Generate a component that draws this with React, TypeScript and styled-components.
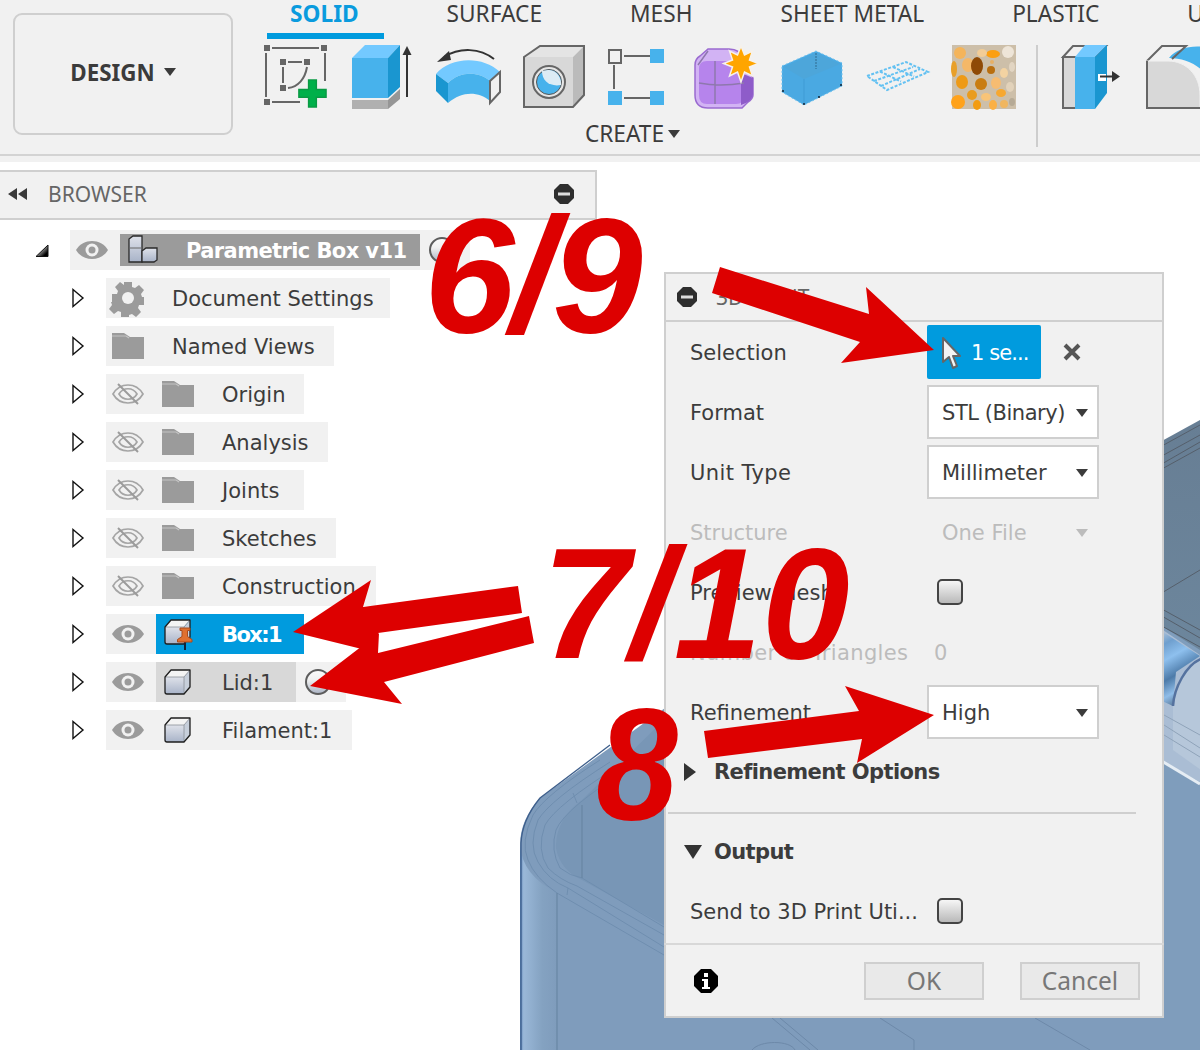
import React from 'react';
import styled, { createGlobalStyle } from 'styled-components';

const Global = createGlobalStyle`
  html, body { margin: 0; padding: 0; background: #fff; }
  * { box-sizing: border-box; }
`;

const UI = `"DejaVu Sans", "Liberation Sans", sans-serif`;
const BAR = `"Noto Sans", "Open Sans", sans-serif`;

const Root = styled.div`
  position: relative; width: 1200px; height: 1050px; overflow: hidden; background: #fff;
  font-family: ${UI}; color: #3c3c3c;
`;
const Canvas = styled.svg`position: absolute; left: 0; top: 0; z-index: 0;`;
const Overlay = styled.svg`position: absolute; left: 0; top: 0; z-index: 3; pointer-events: none;`;
const Big = styled.div<{ $x: number; $y: number; $s: number; $sp?: number; $sx?: number }>`
  position: absolute; left: ${p => p.$x}px; top: ${p => p.$y}px; z-index: 4;
  font: italic 700 ${p => p.$s}px/1 "Liberation Sans", Arial, sans-serif;
  letter-spacing: ${p => p.$sp ?? 0}px; color: #dd0000; white-space: nowrap;
  transform: scaleX(${p => p.$sx ?? 1}); transform-origin: left top;
`;

/* toolbar */
const Toolbar = styled.header`position: relative; z-index: 1; height: 162px; background: #f1f1f1; font-family: ${BAR};`;
const ToolbarMain = styled.div`display: flex; height: 156px; border-bottom: 2px solid #d3d3d3;`;
const DesignButton = styled.div`
  flex: none; width: 220px; height: 122px; margin: 13px 0 0 13px; border: 2px solid #cfcfcf; border-radius: 9px; padding-bottom: 4px;
  display: flex; align-items: center; justify-content: center; gap: 9px; font-weight: 700; font-size: 22.4px; color: #3b3b3b;
`;
const ToolColumn = styled.div`flex: none; margin-left: 31px; width: 1000px; margin-top: -1px;`;
const Tabs = styled.nav`display: flex; gap: 40px; margin-left: 3px; height: 40px;`;
const Tab = styled.div<{ $on?: boolean }>`
  flex: none; height: 40px; padding: 0 25px 0 23px; line-height: 30px; font-size: 22.7px; white-space: nowrap;
  color: ${p => (p.$on ? '#0a9bde' : '#3c3c3c')}; font-weight: ${p => (p.$on ? 700 : 400)};
  border-bottom: 6px solid ${p => (p.$on ? '#009bde' : 'transparent')};
`;
const Ribbon = styled.div`display: flex; margin-top: 6px;`;
const ToolGroup = styled.div`display: flex; flex-direction: column; align-items: center; flex: none;`;
const IconRow = styled.div`display: flex; gap: 22px;`;
const GroupLabel = styled.div`
  display: flex; align-items: center; gap: 4px; margin-top: 9px; padding-right: 15px; font-size: 22.7px; line-height: 31px; color: #3c3c3c;
`;
const Separator = styled.div`flex: none; width: 2px; height: 102px; margin: 0 22px 0 20px; background: #cdcdcd;`;
const Caret = styled.span<{ $c?: string }>`
  display: inline-block; flex: none; width: 0; height: 0;
  border-left: 6px solid transparent; border-right: 6px solid transparent;
  border-top: 8px solid ${p => p.$c ?? '#3b3b3b'};
`;

/* browser */
const BrowserPanel = styled.section`position: relative; z-index: 1; margin-top: 8px; width: 597px;`;
const PanelHead = styled.div`
  height: 50px; display: flex; align-items: center; padding: 0 21px 2px 8px; background: #f1f1f1;
  border: 2px solid #cfcfcf; border-left: 0; font-family: ${BAR}; font-size: 21px; color: #666;
`;
const PanelTitle = styled.span`flex: 1; margin-left: 20px;`;
const Tree = styled.div`display: flex; flex-direction: column; gap: 8px; margin-top: 10px;`;
const Row = styled.div<{ $root?: boolean }>`
  display: flex; align-items: center; height: 40px; padding-left: ${p => (p.$root ? 35 : 72)}px; gap: 22px;
`;
const ToggleBox = styled.span<{ $root?: boolean }>`flex: none; width: ${p => (p.$root ? 13 : 12)}px; display: flex;`;
const Item = styled.div<{ $w: number }>`
  flex: none; display: flex; align-items: center; height: 40px; width: ${p => p.$w}px; background: #f1f1f1;
`;
const EyeSlot = styled.span`flex: none; display: flex; margin-left: 6px; margin-right: 12px;`;
const Pill = styled.div<{ $tone?: 'sel' | 'hover' | 'root'; $w?: number }>`
  flex: none; display: flex; align-items: center; padding-left: 6px; white-space: nowrap;
  width: ${p => (p.$w ? `${p.$w}px` : 'auto')};
  height: ${p => (p.$tone === 'root' ? 32 : 40)}px;
  font-size: 21px;
  letter-spacing: ${p => (p.$tone === 'sel' ? -1.6 : p.$tone === 'root' ? -.6 : 0)}px;
  background: ${p => (p.$tone === 'sel' ? '#009bde' : p.$tone === 'hover' ? '#d8d8d8' : p.$tone === 'root' ? '#9b9b9b' : 'transparent')};
  color: ${p => (p.$tone === 'sel' || p.$tone === 'root' ? '#fff' : '#3c3c3c')};
  font-weight: ${p => (p.$tone === 'sel' || p.$tone === 'root' ? 700 : 400)};
`;
const PillIcon = styled.span`flex: none; display: flex; width: 32px; margin-right: 28px;`;
const PillText = styled.span`padding-top: 2px;`;
const Radio = styled.span`
  flex: none; width: 26px; height: 26px; margin-left: 9px; border-radius: 50%; border: 2px solid #5c5c5c;
  background: linear-gradient(#fafafa, #f0f0f0 40%, #aeb6c6);
`;

/* dialog */
const Dialog = styled.aside`
  position: absolute; left: 664px; top: 272px; width: 500px; height: 746px; z-index: 2; background: #f1f1f1;
  display: flex; flex-direction: column; border: 2px solid #cfcfcf; border-top: 0; font-size: 21px;
`;
const DialogHead = styled.div`
  height: 50px; margin: 0 -2px; display: flex; align-items: center; padding: 0 0 0 11px; gap: 19px;
  border: 2px solid #cfcfcf; font-family: ${BAR}; font-size: 21px; color: #666;
`;
const DialogBody = styled.div`flex: 1; padding-left: 24px;`;
const FormRow = styled.div<{ $off?: boolean }>`
  display: flex; align-items: center; height: 60px; color: ${p => (p.$off ? '#bcbcbc' : '#3c3c3c')};
`;
const Label = styled.span<{ $w?: number; $sp?: number }>`
  flex: none; width: ${p => p.$w ?? 237}px; white-space: nowrap; padding-top: 2px; letter-spacing: ${p => p.$sp ?? 0}px;
`;
const SelectBtn = styled.div`
  width: 114px; height: 54px; background: #009bde; border-radius: 2px; color: #fff; display: flex; align-items: center; gap: 10px; padding: 2px 0 0 14px; letter-spacing: -.9px;
`;
const ClearX = styled.span`display: flex; margin-left: 22px;`;
const Select = styled.div<{ $flat?: boolean; $sp?: number }>`
  width: 172px; height: 54px; display: flex; align-items: center; justify-content: space-between; padding: 2px 9px 0 13px;
  background: ${p => (p.$flat ? 'transparent' : '#fff')}; border: 2px solid ${p => (p.$flat ? 'transparent' : '#cfcfcf')}; white-space: nowrap;
  letter-spacing: ${p => p.$sp ?? 0}px;
`;
const CheckSlot = styled.span`flex: none; display: flex; margin-left: 10px;`;
const Check = styled.span`
  display: block; width: 26px; height: 26px; border: 2px solid #444; border-radius: 5px; background: linear-gradient(#f6f6f6, #b9b9b9); flex: none;
`;
const Section = styled.div<{ $h?: number }>`display: flex; align-items: center; height: ${p => p.$h ?? 60}px; font-weight: 700; font-size: 21px; letter-spacing: -.6px; margin-left: -6px;`;
const SectionGlyph = styled.span`display: flex; width: 30px;`;
const SectionText = styled.span`padding-top: 0;`;
const Rule = styled.div`height: 2px; margin: 10px 26px 9px -22px; background: #cfcfcf;`;
const NumVal = styled.span`margin-left: 7px; padding-top: 2px; color: #bcbcbc;`;
const DialogFoot = styled.div`
  height: 73px; margin: 0 -2px; border-top: 2px solid #d8d8d8; display: flex; align-items: center; padding: 0 24px 0 30px;
`;
const Spacer = styled.span`flex: 1;`;
const FootBtn = styled.div`
  width: 120px; height: 38px; margin-left: 36px; border: 2px solid #cfcfcf; background: #e9e9e9; color: #777; display: flex; align-items: center; justify-content: center; font-size: 24.5px; font-family: ${BAR};
`;

/* drawings */
const Sv = ({ w = 64, h = 64, children }: { w?: number; h?: number; children: React.ReactNode }) => (
  <svg width={w} height={h} viewBox={`0 0 ${w} ${h}`} style={{ display: 'block', overflow: 'visible' }}>{children}</svg>
);

const IconSketch = () => (
  <Sv>
    <g fill="#666">
      <rect x="0" y="0" width="6" height="6" /><rect x="57" y="0" width="6" height="6" /><rect x="0" y="54" width="6" height="6" />
      <rect x="16" y="14" width="6" height="6" /><rect x="40" y="14" width="6" height="6" /><rect x="16" y="40" width="6" height="6" />
    </g>
    <g stroke="#666" strokeWidth="2" fill="none">
      <path d="M8 3H55M2 8V52M8 57H36M61 8V36M24 17H38M19 22V38" />
      <path d="M43 22C41 34 34 42 24 43" />
    </g>
    <path d="M47 37h8v10h10v8H55v10h-8V55H37v-8h10z" transform="translate(-1 -1) scale(.97)" fill="#00b04a" stroke="#0a9a44" strokeWidth="1.5" />
  </Sv>
);
const IconExtrude = () => (
  <Sv>
    <path d="M2 13L15 0H50L38 13z" fill="#73c9ff" />
    <rect x="2" y="13" width="36" height="40" fill="#47b2ec" />
    <path d="M38 13L50 0V42L38 53z" fill="#1a96d0" />
    <path d="M2 55H38V64H2z" fill="#b0b0b0" />
    <path d="M38 55L50 44V54L38 64z" fill="#969696" />
    <path d="M57 52V6" stroke="#333" strokeWidth="2" />
    <path d="M52.500 10L57 1l4.500 9z" fill="#333" />
  </Sv>
);
const IconRevolve = () => (
  <Sv>
    <path d="M0 29C14 12 46 10 64 27L54 36C42 26 24 26 12 38z" fill="#73c9ff" />
    <path d="M12 38C24 26 42 26 54 36V56C42 46 26 46 12 58z" fill="#47b2ec" />
    <path d="M0 29L12 38V58L0 46z" fill="#1a96d0" />
    <path d="M54 36L64 27V47L54 58z" fill="#f1f1f1" stroke="#666" strokeWidth="2" />
    <path d="M58 14C44 3 24 2 8 12" fill="none" stroke="#333" strokeWidth="2" />
    <path d="M1 17L13 6l2 9z" fill="#333" />
  </Sv>
);
const IconHole = () => (
  <Sv>
    <path d="M2 12L18 1H62L51 12z" fill="#e4e4e4" />
    <rect x="2" y="12" width="50" height="50" fill="#d8d8d8" />
    <path d="M51 12L62 1V50L51 62z" fill="#bbb" />
    <path d="M2 12L18 1H62V50L51 62H2z" fill="none" stroke="#666" strokeWidth="2" />
    <circle cx="27" cy="37" r="16" fill="#e6e6e6" stroke="#666" strokeWidth="2" />
    <circle cx="27" cy="37" r="12.500" fill="#47b2ec" stroke="#555" strokeWidth="1" />
    <path d="M20 26C20 36 28 42 39 40C40 33 34 24 26 25z" fill="#dcecf5" />
  </Sv>
);
const IconPatch = () => (
  <Sv>
    <path d="M16 11H42M6 20V44M16 53H42" stroke="#666" strokeWidth="2" />
    <rect x="1" y="5" width="12" height="13" fill="#f1f1f1" stroke="#666" strokeWidth="2" />
    <rect x="42" y="4" width="14" height="14" fill="#47b2ec" />
    <rect x="0" y="46" width="14" height="14" fill="#47b2ec" />
    <rect x="42" y="46" width="14" height="14" fill="#47b2ec" />
  </Sv>
);
const IconForm = () => (
  <Sv>
    <path d="M1 20Q1 14 6 11L14 4H35Q46 4 50 14L59 33V50Q59 54 54 57L48 63H14Q1 63 1 50z" fill="#d2b3f4" stroke="#9a6bd0" strokeWidth="1.500" />
    <path d="M5 24Q5 16 13 16H42Q50 16 50 24V50Q50 59 42 59H13Q5 59 5 50z" fill="#b684ec" />
    <path d="M47 28L59 33V49Q59 54 52 58L47 60z" fill="#8e5cc9" />
    <path d="M5 38Q26 42 50 38M21 16V59M4 20L14 6" fill="none" stroke="#8e78ad" strokeWidth="1.500" />
    <path d="M48 1l3.500 9 8-4-3 9 9 3.500-9 3.500 3 9-8-4-3.500 10-3.500-10-8 4 3-9-9-3.500 9-3.500-3-9 8 4z" transform="translate(-1 0)" fill="#ffa500" stroke="#f7f2ea" strokeWidth="1.500" />
  </Sv>
);
const IconMeshBox = () => (
  <Sv>
    <path d="M2 21L36 6L62 18V41L24 60L2 47z" fill="#4aa9e2" stroke="#6cc1f0" strokeWidth="1" strokeDasharray="2 2" />
    <path d="M4 22L36 8L60 19L24 34z" fill="#4da6da" />
    <path d="M36 8V24" stroke="#3a7fa8" strokeWidth="1.500" strokeDasharray="2 1" />
    <path d="M24 34V59" stroke="#3f9bd5" strokeWidth="1" />
    <path d="M23 59h2M38 52h2M60 40h2M2 46h2" stroke="#123" strokeWidth="1.500" />
  </Sv>
);
const IconThin = () => (
  <Sv>
    <g fill="none" stroke="#63c1f2" strokeWidth="2" strokeDasharray="3 1.500">
      <path d="M1 31L40 17L62 27L21 45z" />
      <path d="M14 26.500L35 36.500M27 22L48 31.500" />
      <path d="M8 36L47 22M15 41L54 24" />
    </g>
  </Sv>
);
const CELLS: [number, number, number, number, string][] = [
  [8, 8, 6, 6, '#f4b45a'], [16, 20, 6, 7, '#f5b868'], [2, 24, 3, 8, '#e8a02a'], [41, 9, 7, 4, '#fb9f12'], [56, 7, 6, 6, '#eee5d8'],
  [25, 21, 6, 9, '#8f4a06'], [39, 25, 4, 4, '#b96f10'], [10, 37, 6, 7, '#ee9a16'], [29, 39, 6, 6, '#c97d12'], [44, 38, 5, 6, '#f6bc72'],
  [52, 28, 4, 5, '#f3d3a2'], [60, 22, 3, 5, '#e2d5c2'], [20, 50, 5, 5, '#e99c1e'], [49, 48, 5, 4, '#f7a830'], [34, 52, 5, 4, '#f8c478'],
  [6, 57, 7, 7, '#ffa21a'], [25, 60, 4, 5, '#f39c12'], [30, 8, 5, 4, '#f2cc96'], [58, 42, 4, 5, '#e2d2ba'], [41, 60, 4, 5, '#fbb044'],
  [52, 59, 4, 4, '#f0b65f'], [60, 57, 3, 4, '#b6aa96'], [40, 17, 2, 2, '#e6b066']
];
const IconTexture = () => (
  <Sv>
    <rect width="64" height="64" fill="#cdbfa9" />
    {CELLS.map(([x, y, a, b, c], i) => <ellipse key={i} cx={x} cy={y} rx={a} ry={b} fill={c} />)}
  </Sv>
);
const IconPress = () => (
  <Sv>
    <path d="M3 12L13 1H46L35 12z" fill="#f1f1f1" stroke="#666" strokeWidth="2" />
    <path d="M3 12H16V63H3z" fill="#d8d8d8" stroke="#666" strokeWidth="2" />
    <path d="M15 12L25 0H47L35 12z" fill="#73c9ff" />
    <rect x="15" y="12" width="20" height="52" fill="#47b2ec" />
    <path d="M35 12L47 0V48L35 64z" fill="#1a96d0" />
    <rect x="38" y="29" width="8" height="7" fill="#fff" />
    <path d="M40 31.500H54" stroke="#333" strokeWidth="2" />
    <path d="M52 26l8 5.500-8 5.500z" fill="#333" />
  </Sv>
);
const IconFillet = () => (
  <Sv>
    <path d="M26 14C36 1 60 -1 78 8V60L62 30C55 20 40 14 26 14z" fill="#47b2ec" transform="translate(-3 -1)" />
    <path d="M1 16L16 1H40L26 14" fill="none" stroke="#666" strokeWidth="2" />
    <path d="M1 16H22C40 16 54 30 54 50V63H1z" fill="#d8d8d8" stroke="#f1f1f1" strokeWidth="1" />
    <path d="M1 16V63H54" fill="none" stroke="#666" strokeWidth="2" />
    <path d="M54 50L64 38V63H54z" fill="#bbb" />
  </Sv>
);

const Toggle = () => (
  <Sv w={12} h={20}><path d="M1 1.500L11 10L1 18.500z" fill="#fff" stroke="#111" strokeWidth="1.400" /></Sv>
);
const RootToggle = () => (
  <Sv w={13} h={13}>
    <defs><linearGradient id="rt" x1="0" y1="0" x2="1" y2="1"><stop offset="0.35" stopColor="#bbb" /><stop offset="0.8" stopColor="#000" /></linearGradient></defs>
    <path d="M1 12.500H13V1z" fill="url(#rt)" stroke="#111" strokeWidth="1" />
  </Sv>
);
const Eye = () => (
  <Sv w={32} h={20}>
    <path d="M0 10C7 -2 25 -2 32 10C25 22 7 22 0 10z" fill="#9b9b9b" />
    <circle cx="16" cy="10" r="6.500" fill="#f1f1f1" /><circle cx="16" cy="10" r="3.500" fill="#9b9b9b" />
  </Sv>
);
const EyeOff = () => (
  <Sv w={32} h={22}>
    <g fill="none" stroke="#a5a5a5" strokeWidth="1.700">
      <path d="M1 11C8 -1 24 -1 31 11C24 23 8 23 1 11z" />
      <path d="M7 11C11 4 21 4 25 11C21 18 11 18 7 11z" />
      <path d="M6 1L26 21" strokeWidth="2" stroke="#9b9b9b" />
    </g>
  </Sv>
);
const Folder = () => (
  <Sv w={32} h={26}>
    <path d="M0 0H12L18 4H32V26H0z" fill="#9b9b9b" />
    <path d="M0 3H14L17 5" stroke="#c4c4c4" strokeWidth="1.200" fill="none" />
  </Sv>
);
const Gear = () => (
  <Sv w={32} h={32}>
    <path fill="#9b9b9b" d="M12 0h8v5l3 1 4-3 5 5-3 4 1 3h2v8h-5l-1 3 3 4-5 5-4-3-3 1v2h-8v-5l-3-1-4 3-5-5 3-4-1-3H0v-8h5l1-3-3-4 5-5 4 3z" />
    <circle cx="16" cy="16" r="6" fill="#f1f1f1" />
  </Sv>
);
const CubeGrad = () => (
  <defs><linearGradient id="cg" x1="0" y1="0" x2="0" y2="1"><stop offset="0" stopColor="#dfe2ea" /><stop offset="1" stopColor="#a8b3c8" /></linearGradient></defs>
);
const CubeFaces = () => (
  <>
    <path d="M3 8L9 1H28L22 8z" fill="#f4f4f4" />
    <path d="M3 8H22V25H3z" fill="url(#cg)" />
    <path d="M22 8L28 1V18L22 25z" fill="#c7cfdb" />
    <path d="M3 8H22V25M22 8L28 1" fill="none" stroke="#8b8f98" strokeWidth=".8" />
    <path d="M3 8L9 1H28V18L22 25H5Q3 25 3 23z" fill="none" stroke="#1e1e1e" strokeWidth="1.300" strokeLinejoin="round" />
  </>
);
const Cube = () => (
  <Sv w={32} h={26}><CubeGrad /><CubeFaces /></Sv>
);
const PinCube = () => (
  <Sv w={32} h={30}>
    <CubeGrad /><CubeFaces />
    <path d="M23 31V22" stroke="#10253a" strokeWidth="2" />
    <path d="M18 9h10v2.500h-2.500v6l4.500 3v2.500H15.500v-2.500l4.500-3v-6H18z" fill="#e0702f" stroke="#a84a1c" strokeWidth="1" />
  </Sv>
);
const Assembly = () => (
  <Sv w={32} h={30}>
    <CubeGrad />
    <path d="M3 27V4L7 1H16V27z" fill="url(#cg)" stroke="#2a2a2a" strokeWidth="1.300" />
    <path d="M3 13H16" stroke="#666" strokeWidth="1" />
    <path d="M16 16L20 13H31V25L28 27H16z" fill="url(#cg)" stroke="#2a2a2a" strokeWidth="1.300" />
  </Sv>
);
const Minus = () => (
  <Sv w={20} h={20}>
    <path d="M6 0h8l6 6v8l-6 6H6l-6-6V6z" fill="#2e2e2e" /><rect x="4" y="8.500" width="12" height="3" fill="#ddd" />
  </Sv>
);
const Collapse = () => (
  <Sv w={20} h={14}><path d="M0 7L9 1V13zM10 7L19 1V13z" fill="#3a3a3a" /></Sv>
);
const Pointer = () => (
  <Sv w={20} h={32}>
    <path d="M2 1V25L8 20L12 31L16 29L12 19H19z" fill="#f4f4f4" stroke="#666" strokeWidth="2" strokeLinejoin="round" />
  </Sv>
);
const XMark = () => (
  <Sv w={18} h={18}><path d="M2 2L16 16M16 2L2 16" stroke="#555" strokeWidth="4" /></Sv>
);
const Info = () => (
  <Sv w={24} h={24}>
    <path d="M7 0h10l7 7v10l-7 7H7l-7-7V7z" fill="#000" />
    <rect x="10" y="4" width="4" height="4" fill="#fff" /><path d="M8 10h6v8h2v2H8v-2h2v-6H8z" fill="#fff" />
  </Sv>
);
const TriRight = () => <Sv w={12} h={18}><path d="M0 0L12 9L0 18z" fill="#333" /></Sv>;
const TriDown = () => <Sv w={18} h={14}><path d="M0 0H18L9 14z" fill="#333" /></Sv>;

type TreeItem = { name: string; w: number; eye?: 'on' | 'off'; icon: React.ReactNode; tone?: 'sel' | 'hover'; pw?: number; radio?: boolean };
const ITEMS: TreeItem[] = [
  { name: 'Document Settings', w: 284, icon: <Gear /> },
  { name: 'Named Views', w: 228, icon: <Folder /> },
  { name: 'Origin', w: 198, eye: 'off', icon: <Folder /> },
  { name: 'Analysis', w: 222, eye: 'off', icon: <Folder /> },
  { name: 'Joints', w: 198, eye: 'off', icon: <Folder /> },
  { name: 'Sketches', w: 230, eye: 'off', icon: <Folder /> },
  { name: 'Construction', w: 270, eye: 'off', icon: <Folder /> },
  { name: 'Box:1', w: 198, eye: 'on', icon: <PinCube />, tone: 'sel', pw: 148 },
  { name: 'Lid:1', w: 240, eye: 'on', icon: <Cube />, tone: 'hover', pw: 140, radio: true },
  { name: 'Filament:1', w: 246, eye: 'on', icon: <Cube /> }
];

export default function App() {
  return (
    <Root>
      <Global />
      <Canvas width={1200} height={1050} viewBox="0 0 1200 1050">
        <defs>
          <linearGradient id="cyl" x1="0" y1="0" x2="1" y2="0">
            <stop offset="0" stopColor="#5f86b8" /><stop offset=".1" stopColor="#9ab8d8" /><stop offset=".6" stopColor="#84a2c1" /><stop offset="1" stopColor="#7f9cbc" />
          </linearGradient>
          <linearGradient id="dark" x1="0" y1="0" x2="0" y2="1">
            <stop offset="0" stopColor="#677e94" /><stop offset="1" stopColor="#7694ab" />
          </linearGradient>
          <linearGradient id="pin" x1="0" y1="0" x2=".3" y2="1">
            <stop offset="0" stopColor="#b9c9db" /><stop offset=".2" stopColor="#6f9fce" /><stop offset=".4" stopColor="#8ec0ee" /><stop offset=".65" stopColor="#4d7ba9" /><stop offset=".85" stopColor="#90bde8" /><stop offset="1" stopColor="#5f7fa0" />
          </linearGradient>
        </defs>
        <path d="M520 1050V845Q520 820 540 798L690 690V1050z" fill="#7f9cbc" />
        <path d="M520 1050V845Q522 875 557 893V1050z" fill="url(#cyl)" />
        <path d="M582 800Q555 820 556 848Q560 870 582 880L664 925V720z" fill="#7896b6" />
        <g fill="none" stroke="#6d8cae" strokeWidth=".9">
          <path d="M600 760Q545 795 533 815Q520 842 528 860Q535 878 557 893L664 955" />
          <path d="M610 762Q550 800 538 820Q528 845 538 862Q548 880 568 888L664 947" />
          <path d="M620 765Q556 805 545 825Q536 850 548 868Q560 880 577 886L664 935" />
          <path d="M630 768Q565 808 556 830Q550 850 560 868Q570 876 582 878L664 927" />
          <path d="M568 888L567 895M573 793L577 803" />
        </g>
        <path d="M557 893V1050M582 805V878" stroke="#64829f" strokeWidth="1" fill="none" />
        <path d="M521 1050V843Q522 820 540 798L610 745" stroke="#3e5f8c" strokeWidth="1.300" fill="none" />
        <path d="M1160 442L1200 420V1050H1160z" fill="url(#dark)" />
        <path d="M1160 625L1200 650V1050H1160z" fill="#7f9dbc" />
        <path d="M1160 628L1200 655V782L1160 760z" fill="#aabdd4" />
        <path d="M1160 630L1200 656L1176 672L1173 706L1160 700z" fill="url(#pin)" />
        <path d="M1173 706C1173 690 1184 665 1201 660V770L1173 750z" fill="#b6c7da" />
        <path d="M1173 706C1174 688 1186 665 1201 659" fill="none" stroke="#55729f" strokeWidth="2.500" />
        <g fill="none" stroke="#555f6b" strokeWidth="1">
          <path d="M1160 447L1200 425M1160 457L1200 435M1160 465L1200 442M1160 470L1200 448M1160 594L1200 570" />
          <path d="M1160 608L1200 630M1160 615L1200 638M1160 625L1200 647" />
        </g>
        <g fill="none" stroke="#8fa3b9" strokeWidth="1">
          <path d="M1164 715L1200 735M1164 725L1200 748M1164 735L1200 757" />
        </g>
        <path d="M1160 760L1200 784" stroke="#e6edf4" strokeWidth="3" />
        <path d="M664 1010H1170V1050H664z" fill="#7f9cbc" />
        <g fill="none" stroke="#6d89a9" strokeWidth="1">
          <path d="M772 1018L810 1050M780 1018L818 1050M1035 1018L1090 1050M880 1018L914 1040V1050" />
          <path d="M752 1050C760 1040 790 1040 795 1050" />
        </g>
      </Canvas>

      <Toolbar>
        <ToolbarMain>
          <DesignButton>DESIGN <Caret /></DesignButton>
          <ToolColumn>
            <Tabs>
              <Tab $on>SOLID</Tab><Tab>SURFACE</Tab><Tab>MESH</Tab><Tab>SHEET METAL</Tab><Tab>PLASTIC</Tab><Tab>UTILITIES</Tab>
            </Tabs>
            <Ribbon>
              <ToolGroup>
                <IconRow>
                  <IconSketch /><IconExtrude /><IconRevolve /><IconHole /><IconPatch /><IconForm /><IconMeshBox /><IconThin /><IconTexture />
                </IconRow>
                <GroupLabel>CREATE <Caret /></GroupLabel>
              </ToolGroup>
              <Separator />
              <IconRow><IconPress /><IconFillet /></IconRow>
            </Ribbon>
          </ToolColumn>
        </ToolbarMain>
      </Toolbar>

      <BrowserPanel>
        <PanelHead>
          <Collapse /><PanelTitle>BROWSER</PanelTitle><Minus />
        </PanelHead>
        <Tree>
          <Row $root>
            <ToggleBox $root><RootToggle /></ToggleBox>
            <Item $w={400}>
              <EyeSlot><Eye /></EyeSlot>
              <Pill $tone="root" $w={300}>
                <PillIcon><Assembly /></PillIcon><PillText>Parametric Box v11</PillText>
              </Pill>
              <Radio />
            </Item>
          </Row>
          {ITEMS.map(it => (
            <Row key={it.name}>
              <ToggleBox><Toggle /></ToggleBox>
              <Item $w={it.w}>
                {it.eye && <EyeSlot>{it.eye === 'on' ? <Eye /> : <EyeOff />}</EyeSlot>}
                <Pill $tone={it.tone} $w={it.pw}>
                  <PillIcon>{it.icon}</PillIcon><PillText>{it.name}</PillText>
                </Pill>
                {it.radio && <Radio />}
              </Item>
            </Row>
          ))}
        </Tree>
      </BrowserPanel>

      <Dialog>
        <DialogHead><Minus /><span>3D PRINT</span></DialogHead>
        <DialogBody>
          <FormRow>
            <Label>Selection</Label>
            <SelectBtn><Pointer />1 se...</SelectBtn>
            <ClearX><XMark /></ClearX>
          </FormRow>
          <FormRow><Label>Format</Label><Select $sp={-.45}>STL (Binary) <Caret /></Select></FormRow>
          <FormRow><Label $sp={.4}>Unit Type</Label><Select>Millimeter <Caret /></Select></FormRow>
          <FormRow $off><Label>Structure</Label><Select $flat>One File <Caret $c="#bcbcbc" /></Select></FormRow>
          <FormRow><Label>Preview Mesh</Label><CheckSlot><Check /></CheckSlot></FormRow>
          <FormRow $off><Label $sp={.37}>Number of Triangles</Label><NumVal>0</NumVal></FormRow>
          <FormRow><Label>Refinement</Label><Select>High <Caret /></Select></FormRow>
          <Section><SectionGlyph><TriRight /></SectionGlyph><SectionText>Refinement Options</SectionText></Section>
          <Rule />
          <Section $h={58}><SectionGlyph><TriDown /></SectionGlyph><SectionText>Output</SectionText></Section>
          <FormRow><Label $w={247}>Send to 3D Print Uti...</Label><Check /></FormRow>
        </DialogBody>
        <DialogFoot>
          <Info /><Spacer /><FootBtn>OK</FootBtn><FootBtn>Cancel</FootBtn>
        </DialogFoot>
      </Dialog>

      <Overlay width={1200} height={1050} viewBox="0 0 1200 1050">
        <g fill="#dd0000">
          <polygon points="720,267 869,314 866,287 934,350 841,363 860,342 712,293" />
          <polygon points="518,586 363,607 371,580 293,632 378,653 378,633 522,613" />
          <polygon points="529,616 378,653 379,633 310,686 402,704 384,682 534,643" />
          <polygon points="704,731 859,711 845,686 934,715 857,763 862,739 708,758" />
        </g>
      </Overlay>
      <Big $x={424} $y={194} $s={163} $sp={-4}>6/9</Big>
      <Big $x={542} $y={524} $s={158}>7/10</Big>
      <Big $x={596} $y={684} $s={160} $sx={.92}>8</Big>
    </Root>
  );
}
